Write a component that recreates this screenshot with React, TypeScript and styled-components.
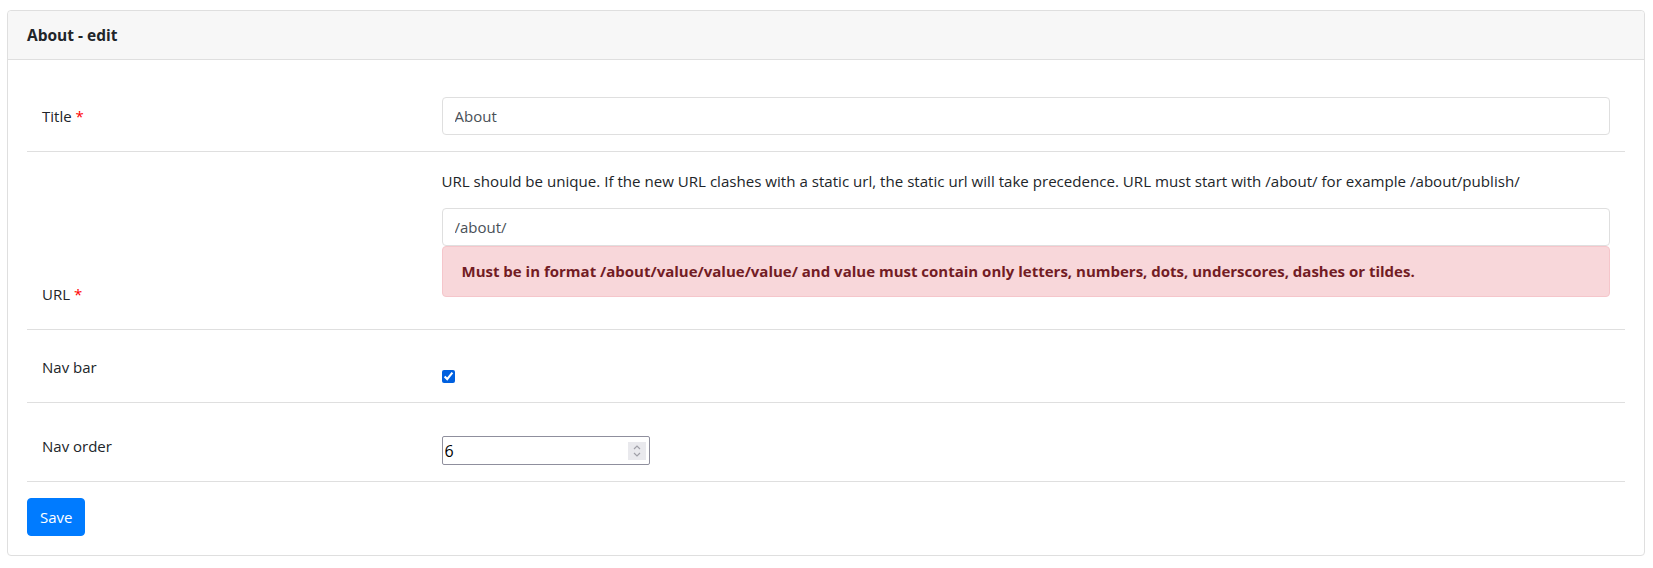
import styled, { createGlobalStyle } from 'styled-components';

const GlobalStyle = createGlobalStyle`
  body {
    margin: 0;
    background: #ffffff;
    font-family: 'Open Sans', 'Noto Sans', 'Liberation Sans', sans-serif;
    font-size: 15px;
    line-height: 24px;
    color: #212529;
  }
  * {
    box-sizing: border-box;
  }
`;

const Page = styled.div`
  padding: 10px 8px 12px 7px;
`;
const Card = styled.div`
  border: 1px solid #dfdfdf;
  border-radius: 4px;
  background-color: #ffffff;
`;
const CardHeader = styled.div`
  padding: 12px 19px 12px;
  background-color: #f7f7f7;
  border-bottom: 1px solid #dfdfdf;
  border-radius: 4px 4px 0 0;
  font-weight: 700;
  font-size: 15.5px;
`;
const CardBody = styled.div`
  padding: 20px 19px 19px;
`;
const FormRow = styled.div`
  display: grid;
  grid-template-columns: 25% 75%;
  align-items: end;
  padding: 17px 0 16px;
  border-bottom: 1px solid #dfdfdf;
`;
const Label = styled.label`
  padding: 7px 15px;
`;
const Required = styled.span`
  color: #ff0000;
`;
const Control = styled.div<{ $top?: number }>`
  padding: ${(p) => p.$top ?? 0}px 15px 0;
`;
const Help = styled.p`
  margin: 0 0 15px;
  font-size: 15.1px;
`;
const TextInput = styled.input`
  display: block;
  width: 100%;
  height: 38px;
  padding: 6px 12px;
  border: 1px solid #dfdfdf;
  border-radius: 4px;
  font-family: inherit;
  font-size: 15px;
  color: #495057;
  outline: none;
`;
const Alert = styled.div`
  margin-bottom: 16px;
  padding: 12px 19px 13px;
  background-color: #f8d7da;
  border: 1px solid #f5c6cb;
  border-radius: 4px;
  color: #721c24;
  font-weight: 700;
`;
const Check = styled.input`
  display: block;
  width: 13px;
  height: 13px;
  margin: 0 0 3px;
  accent-color: #0060df;
`;
const NumberBox = styled.div`
  display: flex;
  align-items: center;
  width: 208px;
  height: 29px;
  padding: 0 3px 0 2px;
  border: 1px solid #8f8f9d;
  border-radius: 2px;
`;
const NumberField = styled.input`
  flex: 1;
  min-width: 0;
  border: none;
  outline: none;
  padding: 0;
  font-family: 'Open Sans', 'Noto Sans', sans-serif;
  font-size: 16px;
  color: #000000;
  background: transparent;
`;
const Spinner = styled.div`
  display: flex;
  flex-direction: column;
  align-items: center;
  justify-content: center;
  width: 18px;
  height: 18px;
  background-color: #e9e9ed;
  color: #a0a0a8;
`;
const SaveButton = styled.button`
  margin-top: 16px;
  padding: 6px 12px;
  height: 38px;
  background-color: #007bff;
  border: 1px solid #007bff;
  border-radius: 4px;
  color: #ffffff;
  font-family: inherit;
  font-size: 15px;
  line-height: 24px;
  cursor: pointer;
`;

const SpinIcon = () => (
  <svg width="10" height="14" viewBox="0 0 10 14" fill="none" stroke="currentColor" strokeWidth="1.2">
    <path d="M2 5l3-3 3 3" />
    <path d="M2 9l3 3 3-3" />
  </svg>
);

const App = () => {
  return (
    <Page>
      <GlobalStyle />
      <Card>
        <CardHeader>About - edit</CardHeader>
        <CardBody>
          <FormRow>
            <Label>
              Title <Required>*</Required>
            </Label>
            <Control>
              <TextInput defaultValue='About' />
            </Control>
          </FormRow>
          <FormRow>
            <Label>
              URL <Required>*</Required>
            </Label>
            <Control>
              <Help>
                URL should be unique. If the new URL clashes with a static url, the static url will take precedence.
                URL must start with /about/ for example /about/publish/
              </Help>
              <TextInput defaultValue='/about/' />
              <Alert>
                Must be in format /about/value/value/value/ and value must contain only letters, numbers, dots,
                underscores, dashes or tildes.
              </Alert>
            </Control>
          </FormRow>
          <FormRow>
            <Label>Nav bar</Label>
            <Control $top={23}>
              <Check type='checkbox' defaultChecked />
            </Control>
          </FormRow>
          <FormRow>
            <Label>Nav order</Label>
            <Control $top={16}>
              <NumberBox>
                <NumberField type='text' defaultValue='6' />
                <Spinner>
                  <SpinIcon />
                </Spinner>
              </NumberBox>
            </Control>
          </FormRow>
          <SaveButton>Save</SaveButton>
        </CardBody>
      </Card>
    </Page>
  );
};

export default App;
